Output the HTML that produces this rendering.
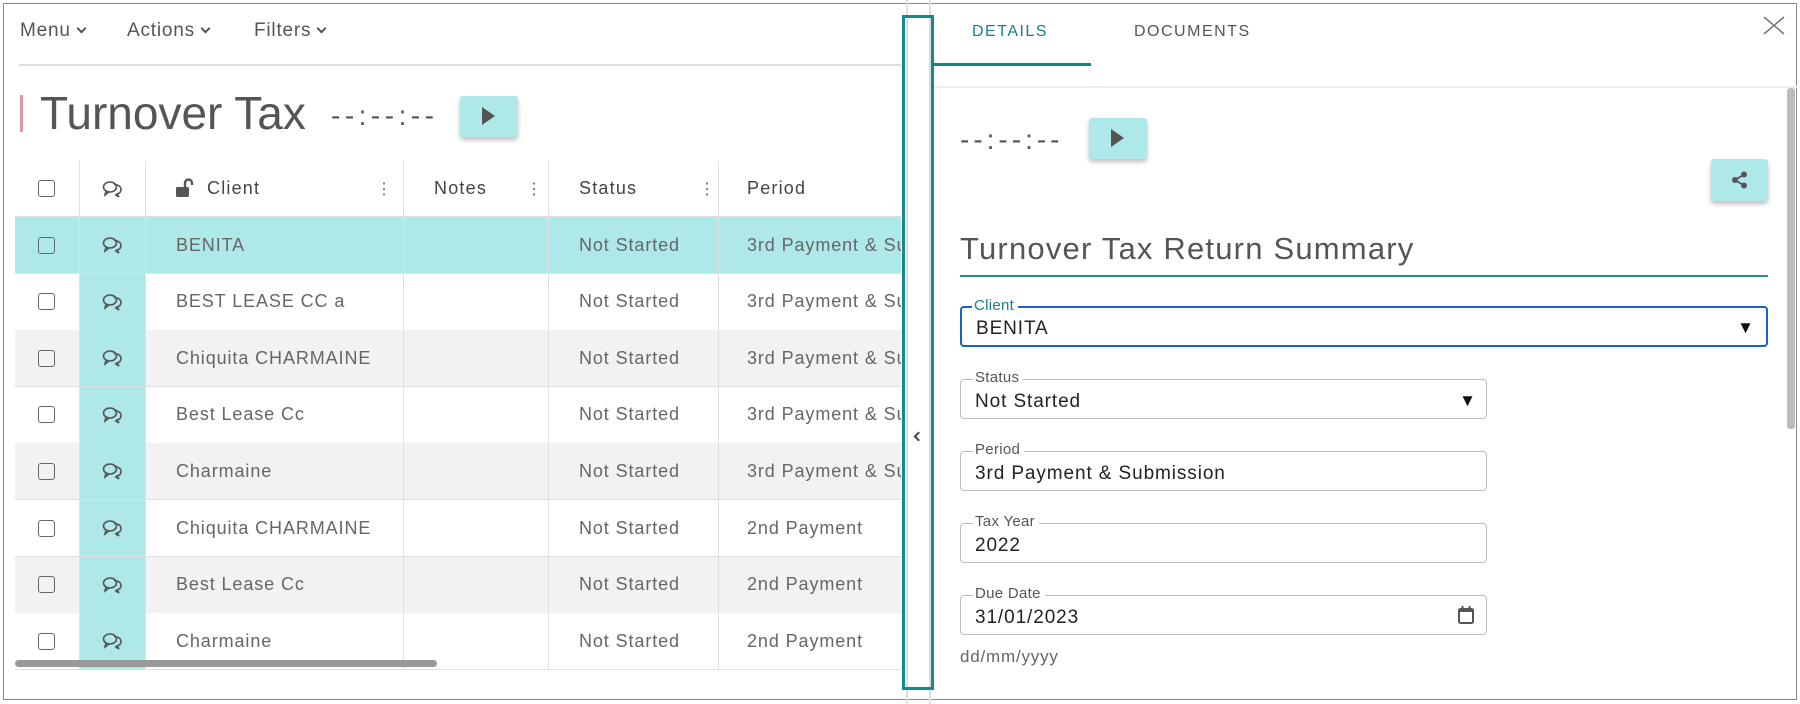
<!DOCTYPE html>
<html><head><meta charset="utf-8"><style>
*{box-sizing:border-box;margin:0;padding:0}
body{width:1800px;height:704px;overflow:hidden;background:#fff;font-family:"Liberation Sans",sans-serif;position:relative;color:#555}
.a{position:absolute}
.frame{left:3px;top:3px;width:1794px;height:697px;border:1.5px solid #8a8a8a}
.menu{top:20px;font-size:19px;color:#555;letter-spacing:.8px}
.chev{display:inline-block;width:7px;height:7px;border-right:2px solid #555;border-bottom:2px solid #555;transform:rotate(45deg);margin-left:7px;position:relative;top:-4px}
.btn{background:#aee8e8;border-radius:3px;box-shadow:0 3px 5px rgba(0,0,0,.25)}
.tri{width:0;height:0;border-left:13px solid #555;border-top:9px solid transparent;border-bottom:9px solid transparent;position:absolute}
.tbl{left:15px;top:161px;width:886px;height:509px;overflow:hidden}
.row{position:absolute;left:0;width:900px;height:57px;border-bottom:1.5px solid #e0e0e0}
.c{position:absolute;top:0;height:100%;border-right:1.5px solid #e0e0e0;display:flex;align-items:center;font-size:18px;color:#666;letter-spacing:.9px;white-space:nowrap}
.cb{width:17px;height:17px;border:1.5px solid #666;border-radius:3px;margin-left:23px}
.hd{color:#444;letter-spacing:1.2px}
.dots{position:absolute;font-size:16px;color:#666;top:18px}
.fld{position:absolute;border:1.5px solid #bbb;border-radius:4px;left:960px}
.lbl{position:absolute;left:12px;top:-11px;background:#fff;padding:0 4px 0 2px;font-size:15px;color:#555;line-height:18px;letter-spacing:.3px}
.val{position:absolute;left:14px;bottom:5px;font-size:19px;color:#222;letter-spacing:.9px}
.dd{position:absolute;right:10px;bottom:7px;font-size:17px;color:#111}
</style></head><body>
<div class="a frame"></div>
<div class="a menu" style="left:20px">Menu<span class="chev"></span></div>
<div class="a menu" style="left:127px">Actions<span class="chev"></span></div>
<div class="a menu" style="left:254px">Filters<span class="chev"></span></div>
<div class="a" style="left:19px;top:64px;width:882px;height:1.5px;background:#ddd"></div>
<div class="a" style="left:20px;top:95px;width:3px;height:37px;background:#d99"></div>
<div class="a" style="left:40px;top:86px;font-size:46px;color:#555;letter-spacing:0">Turnover Tax</div>
<div class="a" style="left:331px;top:100px;font-size:28px;color:#555;letter-spacing:4.5px">--:--:--</div>
<div class="a btn" style="left:460px;top:96px;width:58px;height:41px"><div class="tri" style="left:22px;top:11px"></div></div>

<div class="a tbl">
 <div class="row" style="top:0;height:56px;background:#fff">
  <div class="c" style="left:0;width:65px"><div class="cb"></div></div>
  <div class="c" style="left:65px;width:66px;justify-content:center"><svg width="22" height="18" viewBox="0 0 22 18" fill="none" stroke="#555" stroke-width="1.6"><ellipse cx="8" cy="7" rx="6.5" ry="5"/><path d="M4 11l-1 4 4-3"/><path d="M12 4.5c4 0 7 2 7 5s-2 4-4 4.5l2 3-4-2.5"/></svg></div>
  <div class="c hd" style="left:131px;width:258px;padding-left:29px"><svg class="a" style="left:29px;top:17px" width="20" height="20" viewBox="0 0 20 20"><rect x="1" y="9" width="13" height="10" rx="1.5" fill="#555"/><path d="M10 9V5a3.5 3.5 0 017 0v2" stroke="#555" stroke-width="2.4" fill="none"/></svg><span style="margin-left:32px">Client</span><span class="dots" style="left:230px">⋮</span></div>
  <div class="c hd" style="left:389px;width:145px;padding-left:30px">Notes<span class="dots" style="left:122px">⋮</span></div>
  <div class="c hd" style="left:534px;width:170px;padding-left:30px">Status<span class="dots" style="left:150px">⋮</span></div>
  <div class="c hd" style="left:704px;width:200px;padding-left:28px">Period</div>
 </div>
</div>
<div class="a" id="rows" style="left:15px;top:217px;width:886px;height:453px;overflow:hidden">
</div>
<div class="a" style="left:15px;top:660px;width:422px;height:7px;border-radius:4px;background:#999"></div>

<div class="a" style="left:906px;top:0;width:1.5px;height:704px;background:#ddd"></div>
<div class="a" style="left:929px;top:0;width:1.5px;height:704px;background:#ddd"></div>
<div class="a" style="left:902px;top:15px;width:32px;height:675px;border:3px solid #16898f"></div>
<div class="a" style="left:915px;top:433px;width:7px;height:7px;border-left:2px solid #444;border-bottom:2px solid #444;transform:rotate(45deg)"></div>

<div class="a" style="left:972px;top:23px;font-size:16px;color:#1a7f86;letter-spacing:1.5px">DETAILS</div>
<div class="a" style="left:1134px;top:23px;font-size:16px;color:#555;letter-spacing:1.5px">DOCUMENTS</div>
<div class="a" style="left:934px;top:63px;width:157px;height:2.5px;background:#1a7f86"></div>
<div class="a" style="left:934px;top:86px;width:863px;height:2px;background:#eee"></div>
<svg class="a" style="left:1763px;top:16px" width="22" height="19"><path d="M1 1L21 18M21 1L1 18" stroke="#777" stroke-width="1.6"/></svg>
<div class="a" style="left:1787px;top:88px;width:8px;height:341px;background:#bbb;border-radius:3px"></div>

<div class="a" style="left:960px;top:124px;font-size:28px;color:#555;letter-spacing:4px">--:--:--</div>
<div class="a btn" style="left:1089px;top:118px;width:58px;height:41px"><div class="tri" style="left:22px;top:11px"></div></div>
<div class="a btn" style="left:1711px;top:159px;width:57px;height:42px"><svg class="a" style="left:20px;top:12px" width="18" height="18" viewBox="0 0 18 18"><circle cx="13" cy="3.5" r="3" fill="#555"/><circle cx="4" cy="9" r="3" fill="#555"/><circle cx="13" cy="14.5" r="3" fill="#555"/><path d="M13 3.5L4 9l9 5.5" stroke="#555" stroke-width="1.8" fill="none"/></svg></div>
<div class="a" style="left:960px;top:231px;font-size:31px;color:#555;letter-spacing:1.2px">Turnover Tax Return Summary</div>
<div class="a" style="left:960px;top:275px;width:808px;height:2px;background:#268b8f"></div>

<div class="fld" style="top:306px;width:808px;height:41px;border:2px solid #1565c0"><div class="lbl" style="color:#1a7f86;left:10px">Client</div><div class="val">BENITA</div><div class="dd" style="right:12px">▼</div></div>
<div class="fld" style="top:379px;width:527px;height:40px"><div class="lbl">Status</div><div class="val">Not Started</div><div class="dd">▼</div></div>
<div class="fld" style="top:451px;width:527px;height:40px"><div class="lbl">Period</div><div class="val">3rd Payment &amp; Submission</div></div>
<div class="fld" style="top:523px;width:527px;height:40px"><div class="lbl">Tax Year</div><div class="val">2022</div></div>
<div class="fld" style="top:595px;width:527px;height:40px"><div class="lbl">Due Date</div><div class="val">31/01/2023</div>
<svg class="a" style="left:496px;top:9px" width="18" height="20" viewBox="0 0 18 20"><rect x="2" y="4" width="14" height="14" rx="1.5" fill="none" stroke="#555" stroke-width="2"/><rect x="2" y="4" width="14" height="3" fill="#555"/><path d="M5.5 1v4M12.5 1v4" stroke="#555" stroke-width="2"/></svg></div>
<div class="a" style="left:960px;top:647px;font-size:17px;color:#666;letter-spacing:.8px">dd/mm/yyyy</div>

<script>
var d=[["BENITA","3rd Payment & Submission","#aee8e8"],["BEST LEASE CC a","3rd Payment & Submission","#fff"],["Chiquita CHARMAINE","3rd Payment & Submission","#f2f2f2"],["Best Lease Cc","3rd Payment & Submission","#fff"],["Charmaine","3rd Payment & Submission","#f2f2f2"],["Chiquita CHARMAINE","2nd Payment","#fff"],["Best Lease Cc","2nd Payment","#f2f2f2"],["Charmaine","2nd Payment","#fff"]];
var ic='<svg width="22" height="18" viewBox="0 0 22 18" fill="none" stroke="#555" stroke-width="1.6"><ellipse cx="8" cy="7" rx="6.5" ry="5"/><path d="M4 11l-1 4 4-3"/><path d="M12 4.5c4 0 7 2 7 5s-2 4-4 4.5l2 3-4-2.5"/></svg>';
var h='';d.forEach(function(r,i){h+='<div class="row" style="top:'+(i*56.6)+'px;background:'+r[2]+'"><div class="c" style="left:0;width:65px"><div class="cb"></div></div><div class="c" style="left:65px;width:66px;justify-content:center;background:#aee8e8">'+ic+'</div><div class="c" style="left:131px;width:258px;padding-left:30px">'+r[0]+'</div><div class="c" style="left:389px;width:145px"></div><div class="c" style="left:534px;width:170px;padding-left:30px">Not Started</div><div class="c" style="left:704px;width:200px;padding-left:28px">'+r[1].replace('&','&amp;')+'</div></div>';});
document.getElementById('rows').innerHTML=h;
</script>
</body></html>
